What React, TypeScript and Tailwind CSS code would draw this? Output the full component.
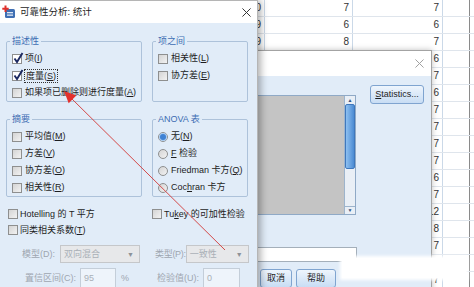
import React, { ReactNode } from "react";

const FONT = "font-['Liberation_Sans','Noto_Sans_CJK_SC',sans-serif]";

/** underlined mnemonic letter */
const U = ({ children }: { children: ReactNode }) => (
  <span className="underline underline-offset-1">{children}</span>
);

const Checkbox = ({ checked }: { checked?: boolean }) => (
  <span
    className={`relative flex h-[10px] w-[10px] shrink-0 border border-[#8e8f8f] ${
      checked ? "bg-white" : "bg-gradient-to-br from-[#d4d4d4] to-[#f2f2f2]"
    }`}
  >
    {checked && (
      <svg viewBox="0 0 11 12" className="absolute -top-[3px] left-0 h-[12px] w-[11px]">
        <path d="M1.5 6.5 L4 10 L9.5 1" fill="none" stroke="#1c2a63" strokeWidth="1.9" />
      </svg>
    )}
  </span>
);

const Radio = ({ checked }: { checked?: boolean }) => (
  <span className="flex h-[10px] w-[10px] shrink-0 items-center justify-center rounded-full border border-[#8e8f8f] bg-gradient-to-br from-[#d4d4d4] to-[#f2f2f2]">
    {checked && <span className="h-[6px] w-[6px] rounded-full bg-[#3f82d4] ring-1 ring-[#a9cbf1]" />}
  </span>
);

const CheckRow = ({
  children,
  checked,
  focus,
  h = "h-[17px]",
  gap = "gap-[3px]",
}: {
  children: ReactNode;
  checked?: boolean;
  focus?: boolean;
  h?: string;
  gap?: string;
}) => (
  <div className={`flex items-center whitespace-nowrap ${h} ${gap}`}>
    <Checkbox checked={checked} />
    <span className={focus ? "-ml-[1px] border border-dotted border-[#333] px-[1px] leading-[12px]" : ""}>
      {children}
    </span>
  </div>
);

const RadioRow = ({ children, checked }: { children: ReactNode; checked?: boolean }) => (
  <div className="flex h-[17px] items-center gap-[3px] whitespace-nowrap">
    <Radio checked={checked} />
    <span>{children}</span>
  </div>
);

const Group = ({ title, children }: { title: string; children: ReactNode }) => (
  <fieldset className="rounded-[2px] border border-[#adc2da] pl-[5px] pt-[2px]">
    <legend className="-ml-[2px] px-[2px] leading-[14px] text-[#3d6db3]">{title}</legend>
    {children}
  </fieldset>
);

const CloseX = ({ color }: { color: string }) => (
  <svg viewBox="0 0 10 10" className="h-[9px] w-[9px]">
    <path d="M0.5 0.5 L9.5 9.5 M9.5 0.5 L0.5 9.5" stroke={color} strokeWidth="1.1" />
  </svg>
);

const DialogIcon = () => (
  <svg viewBox="0 0 14 14" className="h-[14px] w-[14px]">
    <rect x="3" y="4" width="10" height="9" rx="1.5" fill="#3f6fb3" />
    <rect x="5" y="7" width="6" height="1.3" fill="#dfe8f5" />
    <rect x="5" y="9.5" width="6" height="1.3" fill="#dfe8f5" />
    <path d="M3.5 0.5 V7 M0.3 3.7 H6.7" stroke="#e0302a" strokeWidth="2" />
  </svg>
);

const Dropdown = ({ value, w }: { value: string; w: string }) => (
  <div className={`flex h-[18px] ${w} shrink-0 items-center justify-between border border-[#c5c7ca] bg-[#e7e8ea] pl-[3px] pr-[5px] text-[#aab0b7]`}>
    <span>{value}</span>
    <span className="text-[7px] text-[#8d9298]">▼</span>
  </div>
);

const Field = ({ value, w }: { value: string; w: string }) => (
  <div className={`flex h-[20px] ${w} shrink-0 items-center border border-[#c4ced9] bg-[#eef4fb] pl-[3px] text-[#aab0b7]`}>
    {value}
  </div>
);

const sheetRows: [string, string, string][] = [
  ["10", "7", "7"],
  ["9", "6", "6"],
  ["9", "8", "7"],
  ["", "", "6"],
  ["", "", "7"],
  ["", "", "6"],
  ["", "", "7"],
  ["", "", "7"],
  ["", "", "7"],
  ["", "", "7"],
  ["", "", "6"],
  ["", "", "7"],
  ["", "", "12"],
  ["", "", "8"],
  ["", "", "7"],
  ["", "", "7"],
  ["", "", "7"],
];

const Sheet = () => (
  <div className="flex flex-col bg-white text-[10px] leading-[16px] text-[#333] font-['Liberation_Sans',sans-serif]">
    {sheetRows.map((r, i) => (
      <div key={i} className="flex h-[17px] border-b border-[#dfe5ec]">
        <div className="w-[265px] border-r border-[#cbd9e8] pr-[3px] text-right">{r[0]}</div>
        <div className="w-[88px] border-r border-[#cbd9e8] pr-[3px] text-right">{r[1]}</div>
        <div className="w-[90px] border-r border-[#cbd9e8] pr-[3px] text-right">{r[2]}</div>
        <div className="w-[27px] border-r border-[#8a8a8a]" />
      </div>
    ))}
  </div>
);

const BlueButton = ({ children, w }: { children: ReactNode; w: string }) => (
  <div className={`flex h-[19px] ${w} items-center justify-center rounded-[3px] border border-[#7fa4d0] bg-gradient-to-b from-[#eef5fd] to-[#c8ddf4] text-[#1e1e1e]`}>
    {children}
  </div>
);

const BackDialog = () => (
  <div className="absolute left-[200px] top-[50px] flex h-[250px] w-[232px] flex-col border border-[#a3a3a3] shadow-[0_0_6px_rgba(0,0,0,0.25)]">
    <div className="flex h-[25px] items-center justify-end bg-white pr-[7px]">
      <CloseX color="#a0a0a0" />
    </div>
    <div className="flex flex-1 flex-col bg-[#e1ecf8] pl-[39px] pt-[9px]">
      <div className="flex items-start">
        <div className="mt-[10px] flex h-[120px] w-[116px] border border-[#8fa9c6] bg-[#c4c4c4]">
          <div className="flex-1" />
          <div className="flex w-[11px] flex-col border-l border-[#9db4cc] bg-[#e9eff6]">
            <div className="flex h-[8px] items-center justify-center text-[5px] text-[#35557f]">▲</div>
            <div className="h-[65px] rounded-[2px] border border-[#3f78bd] bg-gradient-to-r from-[#8ec0f0] to-[#4b8bd3]" />
            <div className="flex-1" />
            <div className="flex h-[8px] items-center justify-center border-t border-[#9db4cc] text-[5px] text-[#35557f]">▼</div>
          </div>
        </div>
        <div className="ml-[14px]">
          <BlueButton w="w-[54px]">
            <span>
              <U>S</U>tatistics...
            </span>
          </BlueButton>
        </div>
      </div>
      <div className="mt-[32px] h-[15px] w-[117px] border border-[#a4afba] bg-white" />
      <div className="mt-[7px] flex gap-[4px] pl-[20px]">
        <BlueButton w="w-[32px]">取消</BlueButton>
        <BlueButton w="w-[40px]">帮助</BlueButton>
      </div>
    </div>
  </div>
);

const FrontDialog = () => (
  <div className="absolute left-0 top-0 flex h-[300px] w-[258px] flex-col border-r border-t border-[#b5b5b5] bg-[#e1ecf8] text-[#1d1d1d] shadow-[3px_0_7px_rgba(0,0,0,0.3)]">
    <div className="flex h-[22px] shrink-0 items-center bg-white pl-[2px] pr-[6px]">
      <DialogIcon />
      <span className="ml-[4px] flex-1 text-[9.5px]">可靠性分析: 统计</span>
      <CloseX color="#333" />
    </div>
    <div className="px-[6px] pt-[11px]">
      <div className="grid grid-cols-[136px_96px] gap-x-[10px] gap-y-[10px]">
        <Group title="描述性">
          <CheckRow checked>
            项(<U>I</U>)
          </CheckRow>
          <CheckRow checked focus>
            度量(<U>S</U>)
          </CheckRow>
          <CheckRow>
            如果项已删除则进行度量(<U>A</U>)
          </CheckRow>
        </Group>
        <Group title="项之间">
          <CheckRow>
            相关性(<U>L</U>)
          </CheckRow>
          <CheckRow>
            协方差(<U>E</U>)
          </CheckRow>
        </Group>
        <Group title="摘要">
          <CheckRow>
            平均值(<U>M</U>)
          </CheckRow>
          <CheckRow>
            方差(<U>V</U>)
          </CheckRow>
          <CheckRow>
            协方差(<U>O</U>)
          </CheckRow>
          <CheckRow>
            相关性(<U>R</U>)
          </CheckRow>
        </Group>
        <Group title="ANOVA 表">
          <RadioRow checked>
            无(<U>N</U>)
          </RadioRow>
          <RadioRow>
            <U>F</U> 检验
          </RadioRow>
          <RadioRow>
            Friedman 卡方(<U>Q</U>)
          </RadioRow>
          <RadioRow>
            Coc<U>h</U>ran 卡方
          </RadioRow>
        </Group>
      </div>

      <div className="mt-[9px] grid grid-cols-[136px_96px] gap-x-[10px]">
        <div className="pl-[2px]">
          <CheckRow h="h-[16px]" gap="gap-[2px]">
            Hotellin<U>g</U> 的 T 平方
          </CheckRow>
          <CheckRow h="h-[16px]" gap="gap-[2px]">
            同类相关系数(<U>T</U>)
          </CheckRow>
        </div>
        <div>
          <CheckRow h="h-[16px]" gap="gap-[2px]">
            Tu<U>k</U>ey 的可加性检验
          </CheckRow>
        </div>
      </div>

      <div className="mt-[7px] grid grid-cols-[136px_96px] gap-x-[10px] whitespace-nowrap text-[#9ea6b0]">
        <div className="flex items-center pl-[16px]">
          <span className="w-[38px]">模型(D):</span>
          <Dropdown value="双向混合" w="w-[80px]" />
        </div>
        <div className="flex items-center pl-[3px]">
          <span className="w-[32px] tracking-[-0.3px]">类型(P):</span>
          <Dropdown value="一致性" w="w-[63px]" />
        </div>
      </div>

      <div className="mt-[5px] grid grid-cols-[136px_96px] gap-x-[10px] whitespace-nowrap text-[#9ea6b0]">
        <div className="flex items-center pl-[19px]">
          <span className="w-[55px]">置信区间(C):</span>
          <Field value="95" w="w-[36px]" />
          <span className="ml-[5px]">%</span>
        </div>
        <div className="flex items-center pl-[5px]">
          <span className="w-[46px]">检验值(U):</span>
          <Field value="0" w="w-[37px]" />
        </div>
      </div>
    </div>
  </div>
);

const Arrow = () => (
  <svg className="pointer-events-none absolute left-0 top-0 h-[287px] w-[474px]" viewBox="0 0 474 287">
    <line x1="225" y1="250" x2="71" y2="98" stroke="#d44a4a" strokeWidth="1" />
    <polygon points="64,91 68.7,103.2 76.3,95.6" fill="#e3302c" />
  </svg>
);

export default function App() {
  return (
    <div className={`relative h-[287px] w-[474px] overflow-hidden bg-white text-[9px] leading-none ${FONT}`}>
      <Sheet />
      <BackDialog />
      <FrontDialog />
      <div className="absolute left-[342px] top-[258px] h-[20px] w-[124px] bg-white shadow-[0_0_3px_2px_#fff]" />
      <Arrow />
    </div>
  );
}
